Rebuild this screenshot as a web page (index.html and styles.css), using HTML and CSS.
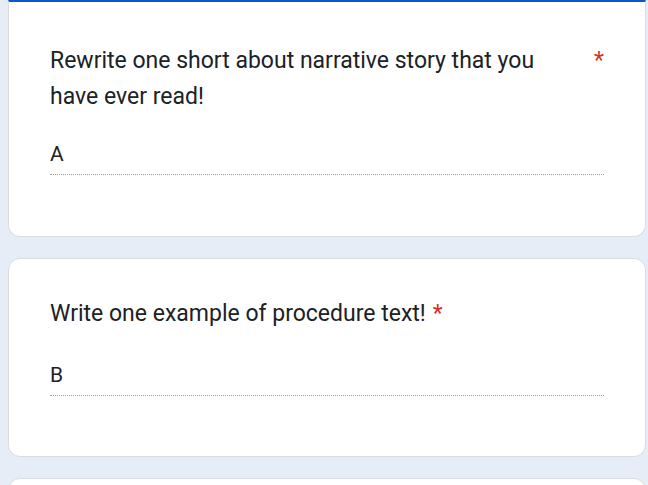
FILE: index.html
```html
<!DOCTYPE html>
<html lang="en">
<head>
    <meta charset="UTF-8">
    <meta name="viewport" content="width=device-width, initial-scale=1.0">
    <title>Form questions</title>
    <link rel="stylesheet" href="styles.css">
</head>
<body>
<div class="form">
    <div class="question active">
        <div class="question-title">
            <span class="title-text">Rewrite one short about narrative story that you have ever read!</span>
            <span class="required">*</span>
        </div>
        <div class="answer">A</div>
    </div>

    <div class="question">
        <div class="question-title">
            <span class="title-text">Write one example of procedure text!</span>
            <span class="required">*</span>
        </div>
        <div class="answer">B</div>
    </div>

    <div class="question empty"></div>
</div>
</body>
</html>
```

FILE: styles.css
```css
body {
    margin: 0;
    background-color: #e6edf7;
    font-family: Roboto, "Liberation Sans", Arial, sans-serif;
    color: #202124;
    overflow: hidden;
}
.form {
    display: flex;
    flex-direction: column;
    gap: 21px;
    padding-left: 8px;
    width: 638px;
}
.question {
    background-color: #fff;
    border: 1px solid #dadce0;
    border-radius: 12px;
    padding: 37px 41px 60px 41px;
}
.question.active {
    border-top: 2px solid #0b57d0;
    border-radius: 0 0 12px 12px;
    padding-top: 41px;
    padding-bottom: 61px;
}
.question.empty {
    height: 40px;
}
.question-title {
    display: flex;
    font-size: 23px;
    line-height: 36px;
}
.required {
    color: #d93025;
    padding-left: 7px;
}
.answer {
    margin-top: 28px;
    font-size: 21px;
    line-height: 30px;
    padding-bottom: 5px;
    border-bottom: 1px dotted #9aa0a6;
}
.active .answer {
    margin-top: 24px;
}
```
